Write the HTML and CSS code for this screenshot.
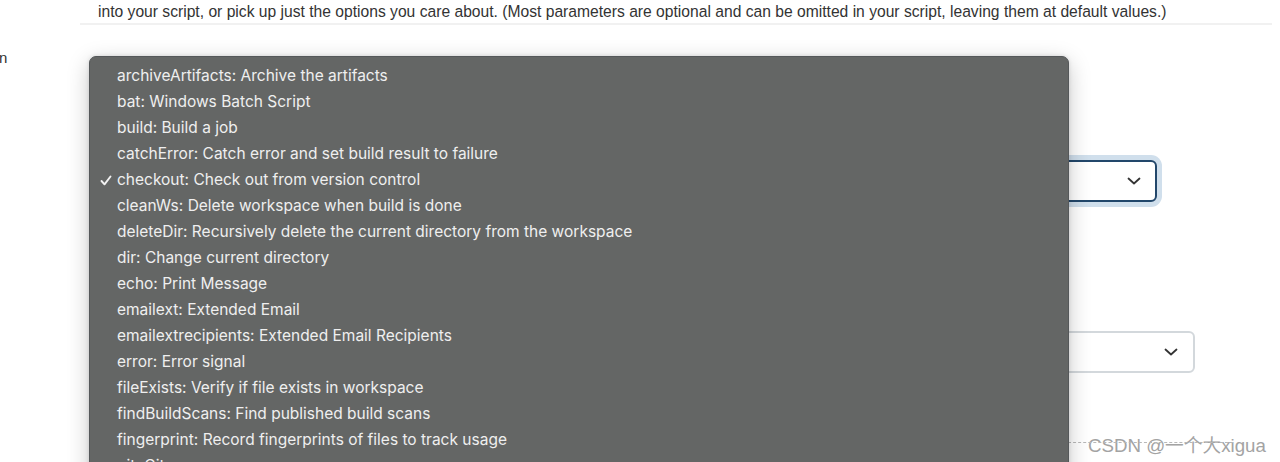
FILE: index.html
```html
<!DOCTYPE html>
<html>
<head>
<meta charset="utf-8">
<link rel="stylesheet" href="styles.css">
</head>
<body>
<div class="page">
  <p class="desc">into your script, or pick up just the options you care about. (Most parameters are optional and can be omitted in your script, leaving them at default values.)</p>
  <div class="body">
    <div class="label">n</div>
    <div class="form">
      <div class="select focused"><svg class="chev" width="14" height="8" viewBox="0 0 14 8"><path d="M1.5 1.5 L7 6.5 L12.5 1.5" fill="none" stroke="#333" stroke-width="1.8" stroke-linecap="round" stroke-linejoin="round"/></svg></div>
      <div class="select second"><svg class="chev" width="14" height="8" viewBox="0 0 14 8"><path d="M1.5 1.5 L7 6.5 L12.5 1.5" fill="none" stroke="#333" stroke-width="1.8" stroke-linecap="round" stroke-linejoin="round"/></svg></div>
    </div>
  </div>
  <div class="watermark"><span class="dash"></span>CSDN @一个大xigua</div>
  <ul class="menu">
    <li>archiveArtifacts: Archive the artifacts</li>
    <li>bat: Windows Batch Script</li>
    <li>build: Build a job</li>
    <li>catchError: Catch error and set build result to failure</li>
    <li class="checked"><svg class="tick" width="12" height="11" viewBox="0 0 12 11"><path d="M1.5 6 L4.5 9.3 L10.5 1.5" fill="none" stroke="#f2f2f2" stroke-width="1.9" stroke-linecap="round" stroke-linejoin="round"/></svg>checkout: Check out from version control</li>
    <li>cleanWs: Delete workspace when build is done</li>
    <li>deleteDir: Recursively delete the current directory from the workspace</li>
    <li>dir: Change current directory</li>
    <li>echo: Print Message</li>
    <li>emailext: Extended Email</li>
    <li>emailextrecipients: Extended Email Recipients</li>
    <li>error: Error signal</li>
    <li>fileExists: Verify if file exists in workspace</li>
    <li>findBuildScans: Find published build scans</li>
    <li>fingerprint: Record fingerprints of files to track usage</li>
    <li>git: Git</li>
  </ul>
</div>
</body>
</html>
```
FILE: styles.css
```css
* { box-sizing: border-box; }
html, body { margin: 0; padding: 0; background: #fff; }
body { font-family: "Liberation Sans", Arial, sans-serif; overflow: hidden; height: 462px; }
.page { position: relative; width: 1280px; height: 462px; overflow: hidden; }
.desc {
  margin: 0 0 0 80px;
  width: 1192px;
  padding: 4px 0 3px 18px;
  font-size: 15.65px;
  line-height: 16px;
  color: #333;
  border-bottom: 2px solid #f1f1f1;
}
.body { display: flex; }
.label { font-size: 15px; color: #333; margin-top: 24px; margin-left: -1px; width: 300px; line-height: 18px; }
.form { display: flex; flex-direction: column; }
.select {
  position: relative;
  height: 42px;
  border-radius: 6px;
  background: #fff;
}
.select .chev { position: absolute; top: 50%; margin-top: -4px; }
.focused {
  margin-top: 135px;
  width: 858px;
  border: 2px solid #22476b;
  box-shadow: 0 0 0 5px #d0dfec;
}
.focused .chev { right: 14px; }
.second {
  margin-top: 129px;
  width: 896px;
  border: 2px solid #d3d8dc;
}
.second .chev { right: 15px; }
.watermark {
  position: absolute;
  left: 1068px;
  top: 430px;
  font-size: 18.7px;
  color: #a3a3a3;
  font-family: "Liberation Sans", "Noto Sans CJK SC", sans-serif;
  padding-left: 20px;
}
.watermark .dash {
  position: absolute;
  left: 0;
  top: 12px;
  width: 165px;
  border-top: 1px dashed #b8b8b8;
}
.menu {
  position: absolute;
  left: 89px;
  top: 56px;
  width: 980px;
  height: 440px;
  margin: 0;
  padding: 6px 0 0 0;
  list-style: none;
  background: #646665;
  border: 1px solid #55585a;
  border-radius: 7px;
  box-shadow: 0 6px 22px rgba(0,0,0,0.22), 0 0 4px rgba(0,0,0,0.12);
}
.menu li {
  position: relative;
  height: 26px;
  line-height: 26px;
  padding-left: 27px;
  font-family: Inter, "Liberation Sans", sans-serif;
  font-size: 15.5px;
  color: #efefef;
  white-space: nowrap;
}
.menu .tick { position: absolute; left: 10px; top: 8px; }
```
